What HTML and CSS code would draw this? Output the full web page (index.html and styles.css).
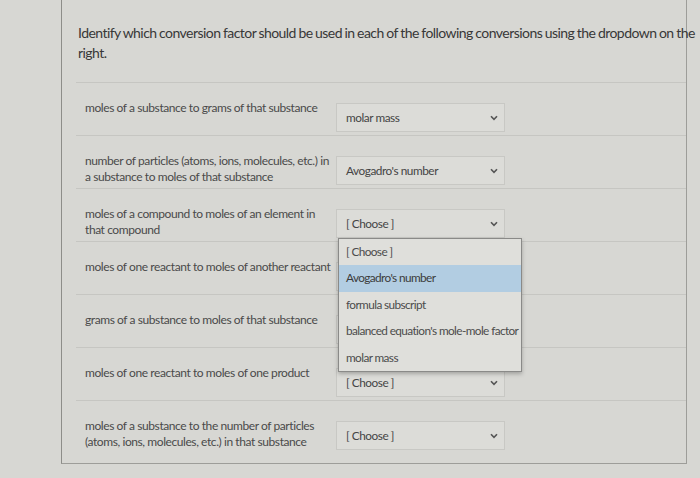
FILE: index.html
```html
<!DOCTYPE html>
<html lang="en">
<head>
  <meta charset="UTF-8">
  <meta name="viewport" content="width=device-width, initial-scale=1.0">
  <link rel="stylesheet" href="styles.css">
  <title>Conversion factors</title>
</head>
<body>
  <div class="card">
    <p class="question">Identify which conversion factor should be used in each of the following conversions using the dropdown on the right.</p>

    <div class="rows">
      <div class="row">
        <div class="label">moles of a substance to grams of that substance</div>
        <div class="select">molar mass <svg class="chev" viewBox="0 0 8 6"><path d="M1 1.2 L4 4.4 L7 1.2"/></svg></div>
      </div>

      <div class="row">
        <div class="label">number of particles (atoms, ions, molecules, etc.) in a substance to moles of that substance</div>
        <div class="select">Avogadro's number <svg class="chev" viewBox="0 0 8 6"><path d="M1 1.2 L4 4.4 L7 1.2"/></svg></div>
      </div>

      <div class="row">
        <div class="label">moles of a compound to moles of an element in that compound</div>
        <div class="select open">[ Choose ] <svg class="chev" viewBox="0 0 8 6"><path d="M1 1.2 L4 4.4 L7 1.2"/></svg>
          <ul class="options">
            <li>[ Choose ]</li>
            <li class="hover">Avogadro's number</li>
            <li>formula subscript</li>
            <li>balanced equation's mole-mole factor</li>
            <li>molar mass</li>
          </ul>
        </div>
      </div>

      <div class="row">
        <div class="label">moles of one reactant to moles of another reactant</div>
        <div class="select">[ Choose ] <svg class="chev" viewBox="0 0 8 6"><path d="M1 1.2 L4 4.4 L7 1.2"/></svg></div>
      </div>

      <div class="row">
        <div class="label">grams of a substance to moles of that substance</div>
        <div class="select">[ Choose ] <svg class="chev" viewBox="0 0 8 6"><path d="M1 1.2 L4 4.4 L7 1.2"/></svg></div>
      </div>

      <div class="row">
        <div class="label">moles of one reactant to moles of one product</div>
        <div class="select">[ Choose ] <svg class="chev" viewBox="0 0 8 6"><path d="M1 1.2 L4 4.4 L7 1.2"/></svg></div>
      </div>

      <div class="row">
        <div class="label">moles of a substance to the number of particles (atoms, ions, molecules, etc.) in that substance</div>
        <div class="select">[ Choose ] <svg class="chev" viewBox="0 0 8 6"><path d="M1 1.2 L4 4.4 L7 1.2"/></svg></div>
      </div>
    </div>
  </div>
</body>
</html>
```

FILE: styles.css
```css
* {
  margin: 0;
  padding: 0;
  box-sizing: border-box;
}

body {
  background-color: #d7d7d3;
  font-family: Lato, "Open Sans", sans-serif;
  color: #3c3c3c;
}

.card {
  margin-left: 61px;
  width: 626px;
  height: 464px;
  border-left: 1px solid #8d8d89;
  border-right: 1px solid #9d9d99;
  border-bottom: 1px solid #9d9d99;
}

/* the question text runs a little past the card edge in the shot */
.question {
  width: 640px;
  padding: 23px 0 0 16px;
  font-size: 14px;
  line-height: 20px;
  letter-spacing: -0.55px;
  word-spacing: -0.5px;
  color: #383838;
}

.rows {
  margin: 19px 0 0 14px;
}

.row {
  display: flex;
  align-items: flex-start;
  height: 53px;
  border-top: 1px solid #c6c6c2;
}

.label {
  width: 260px;
  padding: 17px 0 0 9px;
  font-size: 12px;
  line-height: 16px;
  letter-spacing: -0.42px;
  color: #4a4a4a;
}

.select {
  position: relative;
  display: flex;
  align-items: center;
  justify-content: space-between;
  width: 169px;
  height: 29px;
  margin-top: 20px;
  padding: 0 6px 0 9px;
  border: 1px solid #c8c8c4;
  background-color: #dcdcd8;
  font-size: 11.8px;
  letter-spacing: -0.45px;
  color: #454545;
}

.chev {
  width: 8px;
  height: 6px;
  fill: none;
  stroke: #555;
  stroke-width: 1.6;
}

.options {
  position: absolute;
  top: 28px;
  left: 1px;
  width: 184px;
  list-style: none;
  border: 1px solid #8a8a88;
  background-color: #dfdfdb;
  box-shadow: 0 2px 4px rgba(0, 0, 0, 0.25);
  z-index: 5;
}

.options li {
  height: 26.4px;
  line-height: 26px;
  padding-left: 7px;
  white-space: nowrap;
  letter-spacing: -0.6px;
  color: #4c4c4c;
}

.options li.hover {
  background-color: #b2cde2;
  color: #3c3c3c;
}
```
